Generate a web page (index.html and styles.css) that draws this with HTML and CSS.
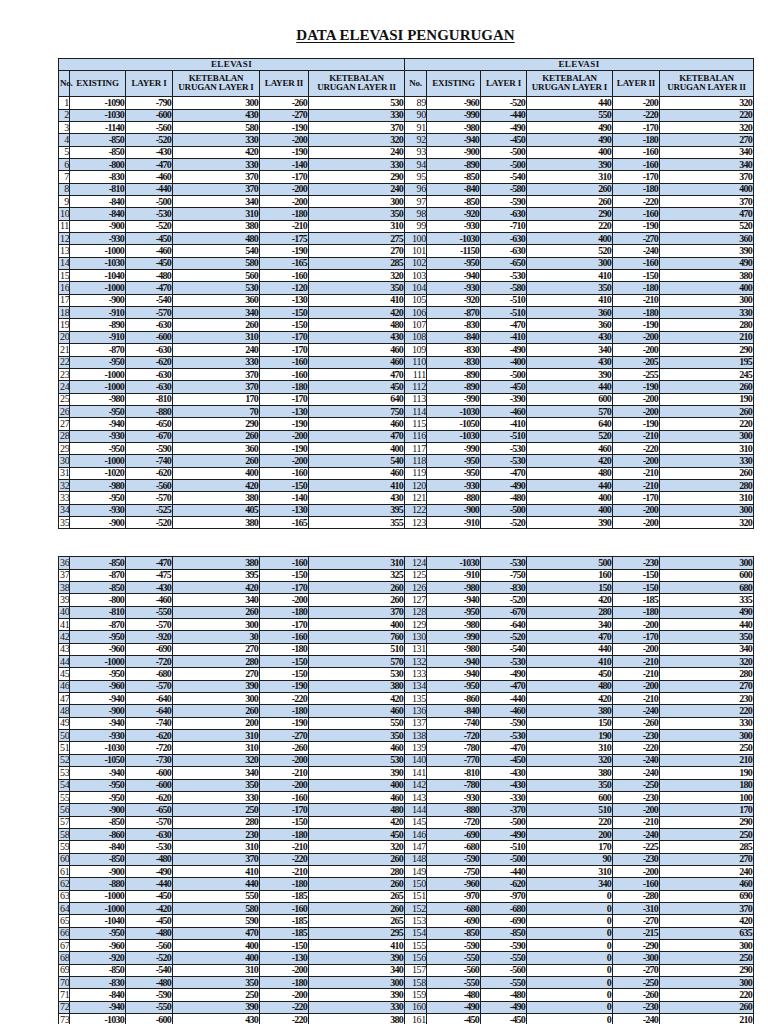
FILE: index.html
```html
<!DOCTYPE html>
<html lang="id">
<head>
<meta charset="utf-8">
<title>Data Elevasi Pengurugan</title>
<link rel="stylesheet" href="styles.css">
</head>
<body>
<div class="page">
<h1 class="title">DATA ELEVASI PENGURUGAN</h1>
<table class="grid t1">
<colgroup>
<col class="c-no"><col class="c-ex"><col class="c-l1"><col class="c-k1"><col class="c-l2"><col class="c-k2">
<col class="c-no2"><col class="c-ex2"><col class="c-l12"><col class="c-k12"><col class="c-l22"><col class="c-k22">
</colgroup>
<thead>
<tr class="band"><th colspan="6">ELEVASI</th><th colspan="6">ELEVASI</th></tr>
<tr class="heads">
<th>No.</th><th>EXISTING</th><th>LAYER I</th><th>KETEBALAN<br>URUGAN LAYER I</th><th>LAYER II</th><th>KETEBALAN<br>URUGAN LAYER II</th>
<th>No.</th><th>EXISTING</th><th>LAYER I</th><th>KETEBALAN<br>URUGAN LAYER I</th><th>LAYER II</th><th>KETEBALAN<br>URUGAN LAYER II</th>
</tr>
</thead>
<tbody>
<tr><td class="no">1</td><td>-1090</td><td>-790</td><td>300</td><td>-260</td><td>530</td><td class="no">89</td><td>-960</td><td>-520</td><td>440</td><td>-200</td><td>320</td></tr>
<tr><td class="no">2</td><td>-1030</td><td>-600</td><td>430</td><td>-270</td><td>330</td><td class="no">90</td><td>-990</td><td>-440</td><td>550</td><td>-220</td><td>220</td></tr>
<tr><td class="no">3</td><td>-1140</td><td>-560</td><td>580</td><td>-190</td><td>370</td><td class="no">91</td><td>-980</td><td>-490</td><td>490</td><td>-170</td><td>320</td></tr>
<tr><td class="no">4</td><td>-850</td><td>-520</td><td>330</td><td>-200</td><td>320</td><td class="no">92</td><td>-940</td><td>-450</td><td>490</td><td>-180</td><td>270</td></tr>
<tr><td class="no">5</td><td>-850</td><td>-430</td><td>420</td><td>-190</td><td>240</td><td class="no">93</td><td>-900</td><td>-500</td><td>400</td><td>-160</td><td>340</td></tr>
<tr><td class="no">6</td><td>-800</td><td>-470</td><td>330</td><td>-140</td><td>330</td><td class="no">94</td><td>-890</td><td>-500</td><td>390</td><td>-160</td><td>340</td></tr>
<tr><td class="no">7</td><td>-830</td><td>-460</td><td>370</td><td>-170</td><td>290</td><td class="no">95</td><td>-850</td><td>-540</td><td>310</td><td>-170</td><td>370</td></tr>
<tr><td class="no">8</td><td>-810</td><td>-440</td><td>370</td><td>-200</td><td>240</td><td class="no">96</td><td>-840</td><td>-580</td><td>260</td><td>-180</td><td>400</td></tr>
<tr><td class="no">9</td><td>-840</td><td>-500</td><td>340</td><td>-200</td><td>300</td><td class="no">97</td><td>-850</td><td>-590</td><td>260</td><td>-220</td><td>370</td></tr>
<tr><td class="no">10</td><td>-840</td><td>-530</td><td>310</td><td>-180</td><td>350</td><td class="no">98</td><td>-920</td><td>-630</td><td>290</td><td>-160</td><td>470</td></tr>
<tr><td class="no">11</td><td>-900</td><td>-520</td><td>380</td><td>-210</td><td>310</td><td class="no">99</td><td>-930</td><td>-710</td><td>220</td><td>-190</td><td>520</td></tr>
<tr><td class="no">12</td><td>-930</td><td>-450</td><td>480</td><td>-175</td><td>275</td><td class="no">100</td><td>-1030</td><td>-630</td><td>400</td><td>-270</td><td>360</td></tr>
<tr><td class="no">13</td><td>-1000</td><td>-460</td><td>540</td><td>-190</td><td>270</td><td class="no">101</td><td>-1150</td><td>-630</td><td>520</td><td>-240</td><td>390</td></tr>
<tr><td class="no">14</td><td>-1030</td><td>-450</td><td>580</td><td>-165</td><td>285</td><td class="no">102</td><td>-950</td><td>-650</td><td>300</td><td>-160</td><td>490</td></tr>
<tr><td class="no">15</td><td>-1040</td><td>-480</td><td>560</td><td>-160</td><td>320</td><td class="no">103</td><td>-940</td><td>-530</td><td>410</td><td>-150</td><td>380</td></tr>
<tr><td class="no">16</td><td>-1000</td><td>-470</td><td>530</td><td>-120</td><td>350</td><td class="no">104</td><td>-930</td><td>-580</td><td>350</td><td>-180</td><td>400</td></tr>
<tr><td class="no">17</td><td>-900</td><td>-540</td><td>360</td><td>-130</td><td>410</td><td class="no">105</td><td>-920</td><td>-510</td><td>410</td><td>-210</td><td>300</td></tr>
<tr><td class="no">18</td><td>-910</td><td>-570</td><td>340</td><td>-150</td><td>420</td><td class="no">106</td><td>-870</td><td>-510</td><td>360</td><td>-180</td><td>330</td></tr>
<tr><td class="no">19</td><td>-890</td><td>-630</td><td>260</td><td>-150</td><td>480</td><td class="no">107</td><td>-830</td><td>-470</td><td>360</td><td>-190</td><td>280</td></tr>
<tr><td class="no">20</td><td>-910</td><td>-600</td><td>310</td><td>-170</td><td>430</td><td class="no">108</td><td>-840</td><td>-410</td><td>430</td><td>-200</td><td>210</td></tr>
<tr><td class="no">21</td><td>-870</td><td>-630</td><td>240</td><td>-170</td><td>460</td><td class="no">109</td><td>-830</td><td>-490</td><td>340</td><td>-200</td><td>290</td></tr>
<tr><td class="no">22</td><td>-950</td><td>-620</td><td>330</td><td>-160</td><td>460</td><td class="no">110</td><td>-830</td><td>-400</td><td>430</td><td>-205</td><td>195</td></tr>
<tr><td class="no">23</td><td>-1000</td><td>-630</td><td>370</td><td>-160</td><td>470</td><td class="no">111</td><td>-890</td><td>-500</td><td>390</td><td>-255</td><td>245</td></tr>
<tr><td class="no">24</td><td>-1000</td><td>-630</td><td>370</td><td>-180</td><td>450</td><td class="no">112</td><td>-890</td><td>-450</td><td>440</td><td>-190</td><td>260</td></tr>
<tr><td class="no">25</td><td>-980</td><td>-810</td><td>170</td><td>-170</td><td>640</td><td class="no">113</td><td>-990</td><td>-390</td><td>600</td><td>-200</td><td>190</td></tr>
<tr><td class="no">26</td><td>-950</td><td>-880</td><td>70</td><td>-130</td><td>750</td><td class="no">114</td><td>-1030</td><td>-460</td><td>570</td><td>-200</td><td>260</td></tr>
<tr><td class="no">27</td><td>-940</td><td>-650</td><td>290</td><td>-190</td><td>460</td><td class="no">115</td><td>-1050</td><td>-410</td><td>640</td><td>-190</td><td>220</td></tr>
<tr><td class="no">28</td><td>-930</td><td>-670</td><td>260</td><td>-200</td><td>470</td><td class="no">116</td><td>-1030</td><td>-510</td><td>520</td><td>-210</td><td>300</td></tr>
<tr><td class="no">29</td><td>-950</td><td>-590</td><td>360</td><td>-190</td><td>400</td><td class="no">117</td><td>-990</td><td>-530</td><td>460</td><td>-220</td><td>310</td></tr>
<tr><td class="no">30</td><td>-1000</td><td>-740</td><td>260</td><td>-200</td><td>540</td><td class="no">118</td><td>-950</td><td>-530</td><td>420</td><td>-200</td><td>330</td></tr>
<tr><td class="no">31</td><td>-1020</td><td>-620</td><td>400</td><td>-160</td><td>460</td><td class="no">119</td><td>-950</td><td>-470</td><td>480</td><td>-210</td><td>260</td></tr>
<tr><td class="no">32</td><td>-980</td><td>-560</td><td>420</td><td>-150</td><td>410</td><td class="no">120</td><td>-930</td><td>-490</td><td>440</td><td>-210</td><td>280</td></tr>
<tr><td class="no">33</td><td>-950</td><td>-570</td><td>380</td><td>-140</td><td>430</td><td class="no">121</td><td>-880</td><td>-480</td><td>400</td><td>-170</td><td>310</td></tr>
<tr><td class="no">34</td><td>-930</td><td>-525</td><td>405</td><td>-130</td><td>395</td><td class="no">122</td><td>-900</td><td>-500</td><td>400</td><td>-200</td><td>300</td></tr>
<tr><td class="no">35</td><td>-900</td><td>-520</td><td>380</td><td>-165</td><td>355</td><td class="no">123</td><td>-910</td><td>-520</td><td>390</td><td>-200</td><td>320</td></tr>
</tbody>
</table>

<table class="grid t2">
<colgroup>
<col class="c-no"><col class="c-ex"><col class="c-l1"><col class="c-k1"><col class="c-l2"><col class="c-k2">
<col class="c-no2"><col class="c-ex2"><col class="c-l12"><col class="c-k12"><col class="c-l22"><col class="c-k22">
</colgroup>
<tbody>
<tr><td class="no">36</td><td>-850</td><td>-470</td><td>380</td><td>-160</td><td>310</td><td class="no">124</td><td>-1030</td><td>-530</td><td>500</td><td>-230</td><td>300</td></tr>
<tr><td class="no">37</td><td>-870</td><td>-475</td><td>395</td><td>-150</td><td>325</td><td class="no">125</td><td>-910</td><td>-750</td><td>160</td><td>-150</td><td>600</td></tr>
<tr><td class="no">38</td><td>-850</td><td>-430</td><td>420</td><td>-170</td><td>260</td><td class="no">126</td><td>-980</td><td>-830</td><td>150</td><td>-150</td><td>680</td></tr>
<tr><td class="no">39</td><td>-800</td><td>-460</td><td>340</td><td>-200</td><td>260</td><td class="no">127</td><td>-940</td><td>-520</td><td>420</td><td>-185</td><td>335</td></tr>
<tr><td class="no">40</td><td>-810</td><td>-550</td><td>260</td><td>-180</td><td>370</td><td class="no">128</td><td>-950</td><td>-670</td><td>280</td><td>-180</td><td>490</td></tr>
<tr><td class="no">41</td><td>-870</td><td>-570</td><td>300</td><td>-170</td><td>400</td><td class="no">129</td><td>-980</td><td>-640</td><td>340</td><td>-200</td><td>440</td></tr>
<tr><td class="no">42</td><td>-950</td><td>-920</td><td>30</td><td>-160</td><td>760</td><td class="no">130</td><td>-990</td><td>-520</td><td>470</td><td>-170</td><td>350</td></tr>
<tr><td class="no">43</td><td>-960</td><td>-690</td><td>270</td><td>-180</td><td>510</td><td class="no">131</td><td>-980</td><td>-540</td><td>440</td><td>-200</td><td>340</td></tr>
<tr><td class="no">44</td><td>-1000</td><td>-720</td><td>280</td><td>-150</td><td>570</td><td class="no">132</td><td>-940</td><td>-530</td><td>410</td><td>-210</td><td>320</td></tr>
<tr><td class="no">45</td><td>-950</td><td>-680</td><td>270</td><td>-150</td><td>530</td><td class="no">133</td><td>-940</td><td>-490</td><td>450</td><td>-210</td><td>280</td></tr>
<tr><td class="no">46</td><td>-960</td><td>-570</td><td>390</td><td>-190</td><td>380</td><td class="no">134</td><td>-950</td><td>-470</td><td>480</td><td>-200</td><td>270</td></tr>
<tr><td class="no">47</td><td>-940</td><td>-640</td><td>300</td><td>-220</td><td>420</td><td class="no">135</td><td>-860</td><td>-440</td><td>420</td><td>-210</td><td>230</td></tr>
<tr><td class="no">48</td><td>-900</td><td>-640</td><td>260</td><td>-180</td><td>460</td><td class="no">136</td><td>-840</td><td>-460</td><td>380</td><td>-240</td><td>220</td></tr>
<tr><td class="no">49</td><td>-940</td><td>-740</td><td>200</td><td>-190</td><td>550</td><td class="no">137</td><td>-740</td><td>-590</td><td>150</td><td>-260</td><td>330</td></tr>
<tr><td class="no">50</td><td>-930</td><td>-620</td><td>310</td><td>-270</td><td>350</td><td class="no">138</td><td>-720</td><td>-530</td><td>190</td><td>-230</td><td>300</td></tr>
<tr><td class="no">51</td><td>-1030</td><td>-720</td><td>310</td><td>-260</td><td>460</td><td class="no">139</td><td>-780</td><td>-470</td><td>310</td><td>-220</td><td>250</td></tr>
<tr><td class="no">52</td><td>-1050</td><td>-730</td><td>320</td><td>-200</td><td>530</td><td class="no">140</td><td>-770</td><td>-450</td><td>320</td><td>-240</td><td>210</td></tr>
<tr><td class="no">53</td><td>-940</td><td>-600</td><td>340</td><td>-210</td><td>390</td><td class="no">141</td><td>-810</td><td>-430</td><td>380</td><td>-240</td><td>190</td></tr>
<tr><td class="no">54</td><td>-950</td><td>-600</td><td>350</td><td>-200</td><td>400</td><td class="no">142</td><td>-780</td><td>-430</td><td>350</td><td>-250</td><td>180</td></tr>
<tr><td class="no">55</td><td>-950</td><td>-620</td><td>330</td><td>-160</td><td>460</td><td class="no">143</td><td>-930</td><td>-330</td><td>600</td><td>-230</td><td>100</td></tr>
<tr><td class="no">56</td><td>-900</td><td>-650</td><td>250</td><td>-170</td><td>480</td><td class="no">144</td><td>-880</td><td>-370</td><td>510</td><td>-200</td><td>170</td></tr>
<tr><td class="no">57</td><td>-850</td><td>-570</td><td>280</td><td>-150</td><td>420</td><td class="no">145</td><td>-720</td><td>-500</td><td>220</td><td>-210</td><td>290</td></tr>
<tr><td class="no">58</td><td>-860</td><td>-630</td><td>230</td><td>-180</td><td>450</td><td class="no">146</td><td>-690</td><td>-490</td><td>200</td><td>-240</td><td>250</td></tr>
<tr><td class="no">59</td><td>-840</td><td>-530</td><td>310</td><td>-210</td><td>320</td><td class="no">147</td><td>-680</td><td>-510</td><td>170</td><td>-225</td><td>285</td></tr>
<tr><td class="no">60</td><td>-850</td><td>-480</td><td>370</td><td>-220</td><td>260</td><td class="no">148</td><td>-590</td><td>-500</td><td>90</td><td>-230</td><td>270</td></tr>
<tr><td class="no">61</td><td>-900</td><td>-490</td><td>410</td><td>-210</td><td>280</td><td class="no">149</td><td>-750</td><td>-440</td><td>310</td><td>-200</td><td>240</td></tr>
<tr><td class="no">62</td><td>-880</td><td>-440</td><td>440</td><td>-180</td><td>260</td><td class="no">150</td><td>-960</td><td>-620</td><td>340</td><td>-160</td><td>460</td></tr>
<tr><td class="no">63</td><td>-1000</td><td>-450</td><td>550</td><td>-185</td><td>265</td><td class="no">151</td><td>-970</td><td>-970</td><td>0</td><td>-280</td><td>690</td></tr>
<tr><td class="no">64</td><td>-1000</td><td>-420</td><td>580</td><td>-160</td><td>260</td><td class="no">152</td><td>-680</td><td>-680</td><td>0</td><td>-310</td><td>370</td></tr>
<tr><td class="no">65</td><td>-1040</td><td>-450</td><td>590</td><td>-185</td><td>265</td><td class="no">153</td><td>-690</td><td>-690</td><td>0</td><td>-270</td><td>420</td></tr>
<tr><td class="no">66</td><td>-950</td><td>-480</td><td>470</td><td>-185</td><td>295</td><td class="no">154</td><td>-850</td><td>-850</td><td>0</td><td>-215</td><td>635</td></tr>
<tr><td class="no">67</td><td>-960</td><td>-560</td><td>400</td><td>-150</td><td>410</td><td class="no">155</td><td>-590</td><td>-590</td><td>0</td><td>-290</td><td>300</td></tr>
<tr><td class="no">68</td><td>-920</td><td>-520</td><td>400</td><td>-130</td><td>390</td><td class="no">156</td><td>-550</td><td>-550</td><td>0</td><td>-300</td><td>250</td></tr>
<tr><td class="no">69</td><td>-850</td><td>-540</td><td>310</td><td>-200</td><td>340</td><td class="no">157</td><td>-560</td><td>-560</td><td>0</td><td>-270</td><td>290</td></tr>
<tr><td class="no">70</td><td>-830</td><td>-480</td><td>350</td><td>-180</td><td>300</td><td class="no">158</td><td>-550</td><td>-550</td><td>0</td><td>-250</td><td>300</td></tr>
<tr><td class="no">71</td><td>-840</td><td>-590</td><td>250</td><td>-200</td><td>390</td><td class="no">159</td><td>-480</td><td>-480</td><td>0</td><td>-260</td><td>220</td></tr>
<tr><td class="no">72</td><td>-940</td><td>-550</td><td>390</td><td>-220</td><td>330</td><td class="no">160</td><td>-490</td><td>-490</td><td>0</td><td>-230</td><td>260</td></tr>
<tr><td class="no">73</td><td>-1030</td><td>-600</td><td>430</td><td>-220</td><td>380</td><td class="no">161</td><td>-450</td><td>-450</td><td>0</td><td>-240</td><td>210</td></tr>
</tbody>
</table>
</div>
</body>
</html>
```
FILE: styles.css
```css
body {
  margin: 0;
  background: #ffffff;
  color: #111111;
  font-family: "Liberation Serif", "Times New Roman", serif;
}

.page {
  width: 695px;
  padding: 27px 0 0 58px;
}

.title {
  margin: 0 0 14px;
  height: 17px;
  font-size: 15px;
  line-height: 17px;
  font-weight: bold;
  text-align: center;
  text-decoration: underline;
  text-underline-offset: 2px;
  text-decoration-thickness: 1px;
}

.grid {
  width: 695px;
  border-collapse: collapse;
  table-layout: fixed;
}

.t2 {
  margin-top: 27px;
}

.c-no { width: 11px; }
.c-ex { width: 56px; }
.c-l1 { width: 47px; }
.c-k1 { width: 87px; }
.c-l2 { width: 49px; }
.c-k2 { width: 96px; }
.c-no2 { width: 22px; }
.c-ex2 { width: 54px; }
.c-l12 { width: 46px; }
.c-k12 { width: 86px; }
.c-l22 { width: 47px; }
.c-k22 { width: 94px; }

.grid th,
.grid td {
  border: 1px solid #1e1e1e;
  padding: 0 1px;
  white-space: nowrap;
  overflow: hidden;
}

.grid th {
  background: #c5d9f1;
  font-size: 9px;
  font-weight: bold;
  text-align: center;
  line-height: 9px;
  letter-spacing: -0.2px;
  overflow: visible;
}

.band th {
  height: 10.6px;
  letter-spacing: 0.4px;
}

.heads th {
  height: 25.7px;
}

.grid td {
  height: 11.35px;
  font-size: 10px;
  line-height: 10px;
  font-weight: bold;
  text-align: right;
  letter-spacing: -0.75px;
}

.grid td.no {
  font-weight: normal;
  font-size: 10px;
  letter-spacing: -0.3px;
  color: #111111;
  padding-right: 0;
  overflow: visible;
}

.t1 tbody tr:nth-child(even) td,
.t2 tbody tr:nth-child(odd) td {
  background: #c5d9f1;
}
```
